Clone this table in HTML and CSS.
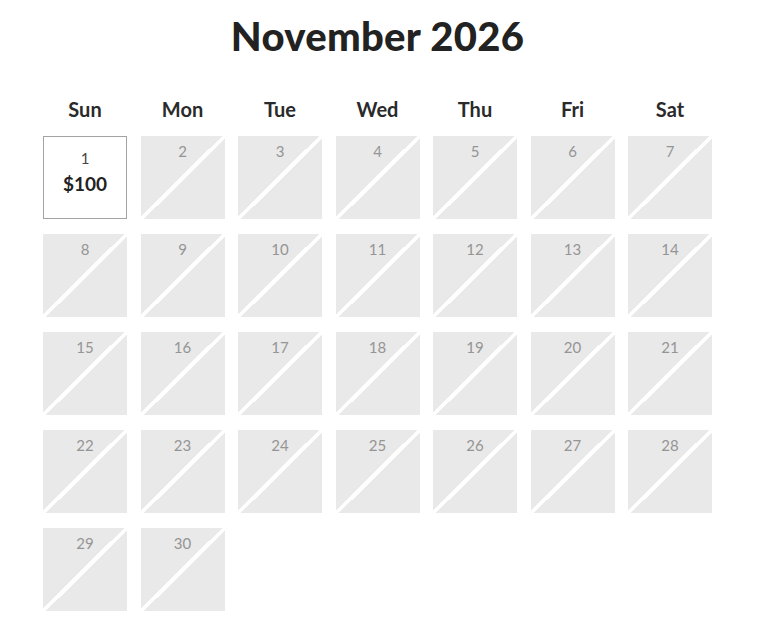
FILE: index.html
```html
<!DOCTYPE html>
<html>
<head>
<meta charset="utf-8">
<link rel="stylesheet" href="styles.css">
</head>
<body>
<div class="cal">
  <h1 class="title">November 2026</h1>
  <div class="heads">
    <div>Sun</div><div>Mon</div><div>Tue</div><div>Wed</div><div>Thu</div><div>Fri</div><div>Sat</div>
  </div>
  <div class="grid">
    <div class="day open"><span class="num">1</span><span class="price">$100</span></div>
    <div class="day"><span class="num">2</span></div>
    <div class="day"><span class="num">3</span></div>
    <div class="day"><span class="num">4</span></div>
    <div class="day"><span class="num">5</span></div>
    <div class="day"><span class="num">6</span></div>
    <div class="day"><span class="num">7</span></div>
    <div class="day"><span class="num">8</span></div>
    <div class="day"><span class="num">9</span></div>
    <div class="day"><span class="num">10</span></div>
    <div class="day"><span class="num">11</span></div>
    <div class="day"><span class="num">12</span></div>
    <div class="day"><span class="num">13</span></div>
    <div class="day"><span class="num">14</span></div>
    <div class="day"><span class="num">15</span></div>
    <div class="day"><span class="num">16</span></div>
    <div class="day"><span class="num">17</span></div>
    <div class="day"><span class="num">18</span></div>
    <div class="day"><span class="num">19</span></div>
    <div class="day"><span class="num">20</span></div>
    <div class="day"><span class="num">21</span></div>
    <div class="day"><span class="num">22</span></div>
    <div class="day"><span class="num">23</span></div>
    <div class="day"><span class="num">24</span></div>
    <div class="day"><span class="num">25</span></div>
    <div class="day"><span class="num">26</span></div>
    <div class="day"><span class="num">27</span></div>
    <div class="day"><span class="num">28</span></div>
    <div class="day"><span class="num">29</span></div>
    <div class="day"><span class="num">30</span></div>
  </div>
</div>
</body>
</html>
```
FILE: styles.css
```css
html, body {
  margin: 0;
  padding: 0;
  background: #fff;
}
body {
  font-family: Lato, "Noto Sans", sans-serif;
  color: #222;
}
.cal {
  width: 669px;
  margin-left: 43px;
  padding-top: 13px;
}
.title {
  margin: 0;
  text-align: center;
  font-size: 40px;
  line-height: 46px;
  font-weight: 900;
  letter-spacing: 0.3px;
  color: #222;
}
.heads {
  display: grid;
  grid-template-columns: repeat(7, 84px);
  column-gap: 13.5px;
  margin-top: 37px;
  height: 28px;
  margin-bottom: 12px;
}
.heads div {
  text-align: center;
  font-size: 20px;
  line-height: 26px;
  font-weight: 700;
  color: #2a2a2a;
}
.grid {
  display: grid;
  grid-template-columns: repeat(7, 84px);
  grid-auto-rows: 83px;
  column-gap: 13.5px;
  row-gap: 15px;
}
.day {
  box-sizing: border-box;
  display: flex;
  flex-direction: column;
  align-items: center;
  padding-top: 6px;
  background: linear-gradient(to bottom right,
    #e9e9e9 calc(50% - 2px),
    #fff calc(50% - 2px),
    #fff calc(50% + 2px),
    #e9e9e9 calc(50% + 2px));
}
.num {
  font-size: 15px;
  line-height: 18px;
  font-weight: 400;
  color: #959595;
}
.day.open {
  background: #fff;
  border: 1px solid #a3a3a3;
  padding-top: 12px;
}
.day.open .num {
  color: #444;
}
.price {
  margin-top: 6px;
  font-size: 19px;
  line-height: 22px;
  font-weight: 700;
  color: #222;
}
```
